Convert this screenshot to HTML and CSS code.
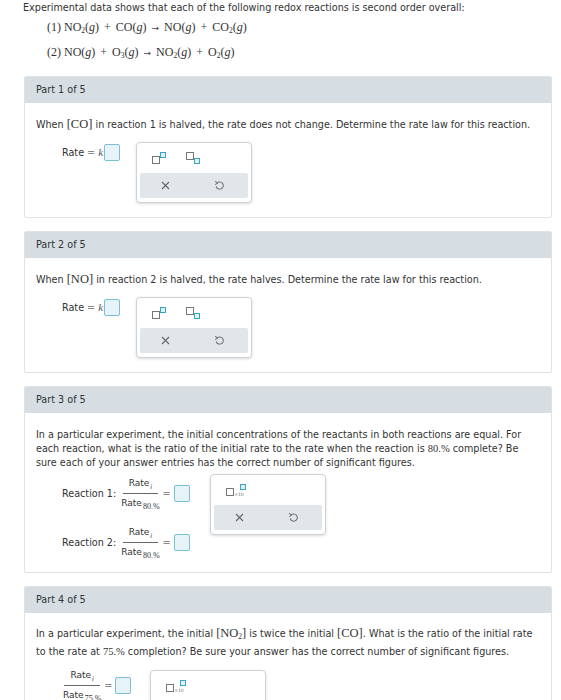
FILE: index.html
```html
<!DOCTYPE html>
<html>
<head>
<meta charset="utf-8">
<link rel="stylesheet" href="styles.css">
</head>
<body>
<div class="page">
  <p class="intro">Experimental data shows that each of the following redox reactions is second order overall:</p>
  <div class="rxn">(1) NO<sub>2</sub><span class="ph">(<i>g</i>)</span><span class="op">+</span>CO<span class="ph">(<i>g</i>)</span><span class="op arrow">→</span>NO<span class="ph">(<i>g</i>)</span><span class="op">+</span>CO<sub>2</sub><span class="ph">(<i>g</i>)</span></div>
  <div class="rxn">(2) NO<span class="ph">(<i>g</i>)</span><span class="op">+</span>O<sub>3</sub><span class="ph">(<i>g</i>)</span><span class="op arrow">→</span>NO<sub>2</sub><span class="ph">(<i>g</i>)</span><span class="op">+</span>O<sub>2</sub><span class="ph">(<i>g</i>)</span></div>

  <section class="card">
    <div class="card-head">Part 1 of 5</div>
    <div class="card-body">
      <p class="q">When <span class="brk">[CO]</span> in reaction 1 is halved, the rate does not change. Determine the rate law for this reaction.</p>
      <div class="answer">
        <div class="rate">Rate<span class="eq">=</span><i class="k">k</i><span class="box"></span></div>
        <div class="palette">
          <div class="pal-top">
            <svg class="ic" width="14" height="12" viewBox="0 0 14 12"><rect x="0.5" y="4.5" width="7" height="7" fill="none" stroke="#777"/><rect x="8.5" y="0.5" width="5" height="5" fill="#dff2f7" stroke="#3aa5c0"/></svg>
            <svg class="ic" width="14" height="12" viewBox="0 0 14 12"><rect x="0.5" y="0.5" width="7" height="7" fill="none" stroke="#777"/><rect x="8.5" y="6.5" width="5" height="5" fill="#dff2f7" stroke="#3aa5c0"/></svg>
          </div>
          <div class="pal-bot">
            <svg width="9" height="9" viewBox="0 0 9 9"><path d="M1 1L8 8M8 1L1 8" stroke="#666" stroke-width="1.1"/></svg>
            <svg width="10" height="11" viewBox="0 0 10 11"><path d="M3 3.2A3.6 3.6 0 1 1 2.2 6.5" fill="none" stroke="#777" stroke-width="1.1"/><path d="M1.2 1.2L3.3 3.2L1.2 4.6" fill="none" stroke="#777" stroke-width="1.1"/></svg>
          </div>
        </div>
      </div>
    </div>
  </section>

  <section class="card">
    <div class="card-head">Part 2 of 5</div>
    <div class="card-body">
      <p class="q">When <span class="brk">[NO]</span> in reaction 2 is halved, the rate halves. Determine the rate law for this reaction.</p>
      <div class="answer">
        <div class="rate">Rate<span class="eq">=</span><i class="k">k</i><span class="box"></span></div>
        <div class="palette">
          <div class="pal-top">
            <svg class="ic" width="14" height="12" viewBox="0 0 14 12"><rect x="0.5" y="4.5" width="7" height="7" fill="none" stroke="#777"/><rect x="8.5" y="0.5" width="5" height="5" fill="#dff2f7" stroke="#3aa5c0"/></svg>
            <svg class="ic" width="14" height="12" viewBox="0 0 14 12"><rect x="0.5" y="0.5" width="7" height="7" fill="none" stroke="#777"/><rect x="8.5" y="6.5" width="5" height="5" fill="#dff2f7" stroke="#3aa5c0"/></svg>
          </div>
          <div class="pal-bot">
            <svg width="9" height="9" viewBox="0 0 9 9"><path d="M1 1L8 8M8 1L1 8" stroke="#666" stroke-width="1.1"/></svg>
            <svg width="10" height="11" viewBox="0 0 10 11"><path d="M3 3.2A3.6 3.6 0 1 1 2.2 6.5" fill="none" stroke="#777" stroke-width="1.1"/><path d="M1.2 1.2L3.3 3.2L1.2 4.6" fill="none" stroke="#777" stroke-width="1.1"/></svg>
          </div>
        </div>
      </div>
    </div>
  </section>

  <section class="card">
    <div class="card-head">Part 3 of 5</div>
    <div class="card-body body3">
      <p class="q">In a particular experiment, the initial concentrations of the reactants in both reactions are equal. For each reaction, what is the ratio of the initial rate to the rate when the reaction is <span class="num">80.%</span> complete? Be sure each of your answer entries has the correct number of significant figures.</p>
      <div class="answer3">
        <div class="rows">
          <div class="frow">
            <span class="rlabel">Reaction 1:</span>
            <span class="frac"><span class="nu">Rate<sub><i>i</i></sub></span><span class="de">Rate<sub class="pct">80.%</sub></span></span>
            <span class="eq">=</span><span class="box"></span>
          </div>
          <div class="frow">
            <span class="rlabel">Reaction 2:</span>
            <span class="frac"><span class="nu">Rate<sub><i>i</i></sub></span><span class="de">Rate<sub class="pct">80.%</sub></span></span>
            <span class="eq">=</span><span class="box"></span>
          </div>
        </div>
        <div class="palette">
          <div class="pal-top">
            <svg class="ic" width="20" height="13" viewBox="0 0 20 13"><rect x="0.5" y="4.5" width="7" height="7" fill="none" stroke="#777"/><text x="8.2" y="11.5" font-size="4.5" fill="#777" font-family="DejaVu Sans">×10</text><rect x="14.5" y="0.5" width="5" height="5" fill="#dff2f7" stroke="#3aa5c0"/></svg>
          </div>
          <div class="pal-bot">
            <svg width="9" height="9" viewBox="0 0 9 9"><path d="M1 1L8 8M8 1L1 8" stroke="#666" stroke-width="1.1"/></svg>
            <svg width="10" height="11" viewBox="0 0 10 11"><path d="M3 3.2A3.6 3.6 0 1 1 2.2 6.5" fill="none" stroke="#777" stroke-width="1.1"/><path d="M1.2 1.2L3.3 3.2L1.2 4.6" fill="none" stroke="#777" stroke-width="1.1"/></svg>
          </div>
        </div>
      </div>
    </div>
  </section>

  <section class="card">
    <div class="card-head">Part 4 of 5</div>
    <div class="card-body body4">
      <p class="q q4">In a particular experiment, the initial <span class="brk">[NO<sub>2</sub>]</span> is twice the initial <span class="brk">[CO]</span>. What is the ratio of the initial rate to the rate at <span class="num">75.%</span> completion? Be sure your answer has the correct number of significant figures.</p>
      <div class="answer4">
        <div class="frow">
          <span class="frac"><span class="nu">Rate<sub><i>i</i></sub></span><span class="de">Rate<sub class="pct">75.%</sub></span></span>
          <span class="eq">=</span><span class="box"></span>
        </div>
        <div class="palette">
          <div class="pal-top">
            <svg class="ic" width="20" height="13" viewBox="0 0 20 13"><rect x="0.5" y="4.5" width="7" height="7" fill="none" stroke="#777"/><text x="8.2" y="11.5" font-size="4.5" fill="#777" font-family="DejaVu Sans">×10</text><rect x="14.5" y="0.5" width="5" height="5" fill="#dff2f7" stroke="#3aa5c0"/></svg>
          </div>
          <div class="pal-bot">
            <svg width="9" height="9" viewBox="0 0 9 9"><path d="M1 1L8 8M8 1L1 8" stroke="#666" stroke-width="1.1"/></svg>
            <svg width="10" height="11" viewBox="0 0 10 11"><path d="M3 3.2A3.6 3.6 0 1 1 2.2 6.5" fill="none" stroke="#777" stroke-width="1.1"/><path d="M1.2 1.2L3.3 3.2L1.2 4.6" fill="none" stroke="#777" stroke-width="1.1"/></svg>
          </div>
        </div>
      </div>
    </div>
  </section>
</div>
</body>
</html>
```

FILE: styles.css
```css
html, body {
  margin: 0;
  padding: 0;
  background: #fff;
}
body {
  font-family: "DejaVu Sans", Verdana, sans-serif;
  font-size: 9.65px;
  color: #333;
}
.page {
  padding: 1px 9px 0 24px;
}
.intro {
  margin: 0 0 0 -1px;
  height: 14px;
  line-height: 14px;
}
.rxn {
  font-family: "Liberation Serif", "Times New Roman", serif;
  font-size: 12px;
  color: #333;
  margin-left: 23px;
  height: 25px;
  line-height: 25px;
}
.rxn sub, .q sub {
  font-size: 7.5px;
  vertical-align: -2px;
  line-height: 0;
}
.op {
  margin: 0 5px;
  color: #444;
}
.arrow {
  font-family: "DejaVu Sans", sans-serif;
  font-size: 9px;
}
.card {
  border: 1px solid #e2e2e2;
  border-radius: 2px;
  margin-top: 13px;
  background: #fff;
}
.rxn + .card { margin-top: 11px; }
.card-head {
  background: #d6dde3;
  height: 26px;
  line-height: 26px;
  padding-left: 11px;
}
.card-body {
  padding: 14px 11px 14px 11px;
}
.body3 {
  padding-top: 15px;
  padding-bottom: 14px;
}
.body4 {
  padding-top: 11px;
}
.q {
  margin: 0;
  line-height: 14px;
}
.q4 {
  line-height: 18px;
}
.brk {
  font-family: "Liberation Serif", "Times New Roman", serif;
  font-size: 12.5px;
  white-space: nowrap;
}
.num {
  font-family: "Liberation Serif", "Times New Roman", serif;
  font-size: 10.5px;
}
.answer {
  display: flex;
  align-items: flex-start;
  margin-top: 10px;
  padding-left: 26px;
}
.rate {
  display: flex;
  align-items: center;
  height: 20px;
}
.eq {
  color: #888;
  margin: 0 3px;
}
.k {
  font-family: "Liberation Serif", serif;
  font-size: 11px;
  color: #555;
  margin-right: 1px;
}
.box {
  display: inline-block;
  width: 14px;
  height: 15px;
  border: 1px solid #79bfd6;
  background: #e6f3f9;
  border-radius: 2px;
}
.palette {
  width: 114px;
  height: 59px;
  border: 1px solid #cfd3d6;
  border-radius: 4px;
  box-shadow: 0 1px 3px rgba(0,0,0,0.15);
  background: #fff;
  display: flex;
  flex-direction: column;
  margin-left: 16px;
}
.pal-top {
  flex: 1;
  display: flex;
  align-items: center;
  gap: 20px;
  padding-left: 15px;
}
.pal-bot {
  height: 25px;
  background: #e1e6ea;
  margin: 0 3px 4px 3px;
  border-radius: 2px;
  display: flex;
  align-items: center;
  gap: 44px;
  padding-left: 21px;
}
.answer3 {
  display: flex;
  align-items: flex-start;
  margin-top: 4px;
  padding-left: 26px;
}
.rows {
  display: flex;
  flex-direction: column;
  gap: 18px;
  margin-top: 4px;
}
.frow {
  display: flex;
  align-items: center;
}
.rlabel {
  margin-right: 5px;
}
.frac {
  display: inline-flex;
  flex-direction: column;
  align-items: center;
  font-size: 9px;
}
.frac .nu {
  padding: 0 6px 4px 6px;
  border-bottom: 1px solid #666;
  line-height: 11px;
}
.frac .de {
  padding-top: 4px;
  line-height: 11px;
}
.frac sub {
  font-size: 6.5px;
  vertical-align: -3px;
  line-height: 0;
  margin-left: 1px;
}
.frac sub.pct {
  font-family: "Liberation Serif", serif;
  font-size: 8px;
}
.answer3 .palette {
  margin-left: 20px;
}
.answer4 {
  display: flex;
  align-items: flex-start;
  margin-top: 9px;
  padding-left: 27px;
}
.answer4 .palette {
  margin-left: 19px;
}
```
